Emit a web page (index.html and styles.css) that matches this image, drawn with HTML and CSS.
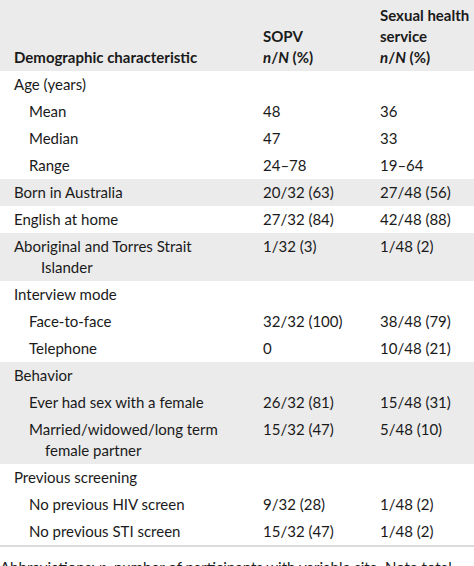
FILE: index.html
```html
<!DOCTYPE html>
<html lang="en">
<head>
<meta charset="utf-8">
<title>Demographic characteristics</title>
<link rel="stylesheet" href="styles.css">
</head>
<body>
<table class="demo">
  <colgroup>
    <col class="c1">
    <col class="c2">
    <col class="c3">
  </colgroup>
  <thead>
    <tr class="head">
      <th class="label">Demographic characteristic</th>
      <th>SOPV<br><i>n</i>/<i>N</i> (%)</th>
      <th>Sexual health<br>service<br><i>n</i>/<i>N</i> (%)</th>
    </tr>
  </thead>
  <tbody class="group">
    <tr><td class="label">Age (years)</td><td></td><td></td></tr>
    <tr><td class="label sub">Mean</td><td>48</td><td>36</td></tr>
    <tr><td class="label sub">Median</td><td>47</td><td>33</td></tr>
    <tr><td class="label sub">Range</td><td>24–78</td><td>19–64</td></tr>
  </tbody>
  <tbody class="group shade">
    <tr><td class="label">Born in Australia</td><td>20/32 (63)</td><td>27/48 (56)</td></tr>
  </tbody>
  <tbody class="group">
    <tr><td class="label">English at home</td><td>27/32 (84)</td><td>42/48 (88)</td></tr>
  </tbody>
  <tbody class="group shade">
    <tr><td class="label hang">Aboriginal and Torres Strait Islander</td><td>1/32 (3)</td><td>1/48 (2)</td></tr>
  </tbody>
  <tbody class="group">
    <tr><td class="label">Interview mode</td><td></td><td></td></tr>
    <tr><td class="label sub">Face-to-face</td><td>32/32 (100)</td><td>38/48 (79)</td></tr>
    <tr><td class="label sub">Telephone</td><td>0</td><td>10/48 (21)</td></tr>
  </tbody>
  <tbody class="group shade">
    <tr><td class="label">Behavior</td><td></td><td></td></tr>
    <tr><td class="label sub">Ever had sex with a female</td><td>26/32 (81)</td><td>15/48 (31)</td></tr>
    <tr><td class="label sub subhang">Married/widowed/long term female partner</td><td>15/32 (47)</td><td>5/48 (10)</td></tr>
  </tbody>
  <tbody class="group last">
    <tr><td class="label">Previous screening</td><td></td><td></td></tr>
    <tr><td class="label sub">No previous HIV screen</td><td>9/32 (28)</td><td>1/48 (2)</td></tr>
    <tr><td class="label sub">No previous STI screen</td><td>15/32 (47)</td><td>1/48 (2)</td></tr>
  </tbody>
</table>
<p class="note">Abbreviations: <i>n</i>, number of participants with variable site. Note total</p>
</body>
</html>
```
FILE: styles.css
```css
html, body {
  margin: 0;
  padding: 0;
  background: #ffffff;
}

body {
  font-family: Lato, "Open Sans", "Liberation Sans", sans-serif;
  font-size: 15px;
  color: #1a1a1a;
  width: 474px;
  overflow: hidden;
}

.demo {
  width: 474px;
  border-collapse: collapse;
  table-layout: fixed;
}

.c1 { width: 263px; }
.c2 { width: 117px; }
.c3 { width: 94px; }

.demo th,
.demo td {
  padding: 3px 0;
  line-height: 21px;
  text-align: left;
  vertical-align: top;
  font-weight: normal;
}

.head th {
  background: #ebebeb;
  font-weight: bold;
  vertical-align: bottom;
  padding: 5px 0 3px;
  white-space: nowrap;
}

.head th i {
  font-style: italic;
}

.demo .label {
  padding-left: 14px;
  padding-right: 32px;
}

.demo .sub {
  padding-left: 29px;
}

.demo .hang {
  padding-left: 41px;
  text-indent: -27px;
}

.demo .subhang {
  padding-left: 45px;
  text-indent: -16px;
}

.shade td {
  background: #ebebeb;
}

.last tr:last-child td {
  border-bottom: 2px solid #dcdcdc;
}

.note {
  margin: 10px 0 0;
  font-size: 15px;
  line-height: 21px;
  white-space: nowrap;
}
```
